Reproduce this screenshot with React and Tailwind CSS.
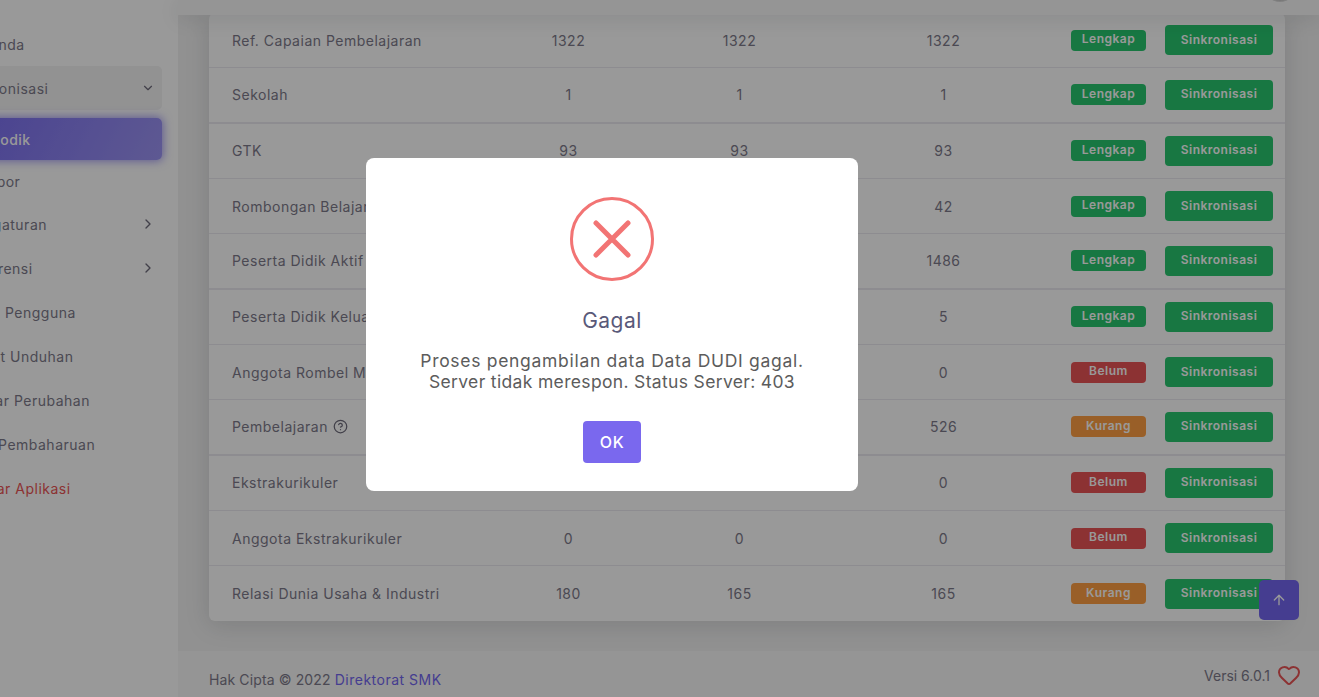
import React from 'react'
import { ChevronDown, ChevronRight, ArrowUp, Heart, HelpCircle } from 'lucide-react'

const font = { fontFamily: '"Inter", "Open Sans", sans-serif' }

const menu = [
  { label: 'Beranda', pl: 'pl-[36px]' },
  { label: 'Sinkronisasi', pl: 'pl-[33px]', open: true },
  { label: 'Dapodik', active: true },
  { label: 'E-Rapor', pl: 'pl-[33px]', short: true },
  { label: 'Pengaturan', pl: 'pl-[36px]', arrow: true },
  { label: 'Referensi', pl: 'pl-[36px]', arrow: true },
  { label: 'Data Pengguna', pl: 'pl-[38px]' },
  { label: 'Pusat Unduhan', pl: 'pl-[36px]' },
  { label: 'Daftar Perubahan', pl: 'pl-[36px]' },
  { label: 'Cek Pembaharuan', pl: 'pl-[36px]' },
  { label: 'Keluar Aplikasi', pl: 'pl-[36px]', danger: true },
]

const rows = [
  ['Ref. Capaian Pembelajaran', '1322', '1322', '1322', 'Lengkap'],
  ['Sekolah', '1', '1', '1', 'Lengkap'],
  ['GTK', '93', '93', '93', 'Lengkap'],
  ['Rombongan Belajar', '42', '42', '42', 'Lengkap'],
  ['Peserta Didik Aktif', '1486', '1486', '1486', 'Lengkap'],
  ['Peserta Didik Keluar', '5', '5', '5', 'Lengkap'],
  ['Anggota Rombel Matpil', '0', '0', '0', 'Belum'],
  ['Pembelajaran', '526', '526', '526', 'Kurang', true],
  ['Ekstrakurikuler', '0', '0', '0', 'Belum'],
  ['Anggota Ekstrakurikuler', '0', '0', '0', 'Belum'],
  ['Relasi Dunia Usaha & Industri', '180', '165', '165', 'Kurang'],
]

const badgeColor = {
  Lengkap: 'bg-[#28c76f]',
  Belum: 'bg-[#ea5455]',
  Kurang: 'bg-[#ff9f43]',
}

const SideItem = ({ item }) => {
  if (item.active) {
    return (
      <div className="ml-[-70px] flex h-[42px] w-[232px] items-center rounded-[5px] bg-[linear-gradient(118deg,#7367f0,rgba(115,103,240,0.7))] pl-[42px] text-[14px] font-medium tracking-[0.5px] text-white shadow-[0_0_10px_1px_rgba(115,103,240,0.7)]">
        {item.label}
      </div>
    )
  }
  return (
    <div className={`ml-[-70px] flex w-[232px] items-center justify-between rounded-[5px] pr-[6px] text-[14px] tracking-[0.5px] ${item.pl} ${item.short ? 'h-[42px]' : 'h-[44px]'} ${item.open ? 'mb-[8px] bg-[#f3f3f3]' : ''} ${item.danger ? 'text-[#ea5455]' : 'text-[#7d7a8a]'}`}>
      <span>{item.label}</span>
      {item.open && <ChevronDown size={14} className="mr-[1px] text-[#6e6b7b]" />}
      {item.arrow && <ChevronRight size={16} className="text-[#6e6b7b]" />}
    </div>
  )
}

const Row = ({ row, last, thick }) => (
  <div className={`flex items-center text-[14px] tracking-[0.5px] text-[#7d7a8a] ${last ? 'h-[55px]' : thick ? 'h-[55.33px] border-b-2 border-[#ebe9f1]' : 'h-[55.33px] border-b border-[#ebe9f1]'}`}>
    <div className="flex w-[286px] items-center gap-[5px] pl-[23px]">
      {row[0]}
      {row[5] && <HelpCircle size={15} className="text-[#6e6b7b]" />}
    </div>
    <div className="w-[147px] text-center">{row[1]}</div>
    <div className="w-[195px] text-center">{row[2]}</div>
    <div className="w-[213px] text-center">{row[3]}</div>
    <div className="flex w-[235px] items-center justify-end pr-[12px]">
      <span className={`flex h-[21px] w-[75px] items-center justify-center rounded-[4px] pb-[2px] text-[12px] font-semibold text-white ${badgeColor[row[4]]}`}>{row[4]}</span>
      <span className="ml-[19px] flex h-[30px] w-[108px] items-center justify-center rounded-[4px] bg-[#28c76f] pb-[1px] text-[12px] font-semibold text-white">Sinkronisasi</span>
    </div>
  </div>
)

export default function App() {
  return (
    <div className="relative flex h-[697px] w-[1319px] overflow-hidden bg-[#f2f2f2]" style={font}>
      {/* Sidebar */}
      <aside className="w-[178px] shrink-0 overflow-hidden bg-white pt-[22px]">
        {menu.map((item) => <SideItem key={item.label} item={item} />)}
      </aside>

      <main className="flex min-w-0 flex-1 flex-col">
        {/* Navbar, mostly scrolled away */}
        <header className="relative z-10 flex h-[15px] shrink-0 justify-end bg-[#f8f8f8] pr-[22px] shadow-[0_4px_20px_rgba(34,41,47,0.12)]">
          <div className="relative -mt-[32px] h-[34px] w-[34px] rounded-full border border-[#d8d8d8] bg-[#c9c9c9]">
            <span className="absolute bottom-[1px] right-[-4px] h-[10px] w-[10px] rounded-full bg-[#28c76f]" />
          </div>
        </header>

        <div className="flex-1 pl-[31px] pr-[34px]">
          <div className="-mt-[2px] overflow-hidden rounded-[6px] bg-white shadow-[0_4px_24px_rgba(34,41,47,0.15)]">
            {rows.map((row, i) => <Row key={row[0]} row={row} last={i === rows.length - 1} thick={i % 3 === 1} />)}
          </div>
        </div>

        <footer className="flex h-[46px] shrink-0 items-center justify-between bg-[#f8f8f8] pl-[31px] pr-[18px] text-[14px] text-[#7d7a8a]">
          <span className="pt-[10px] tracking-[0.12px]">Hak Cipta © 2022 <span className="tracking-[0.5px] text-[#7367f0]">Direktorat SMK</span></span>
          <span className="flex items-center gap-[7px] pt-[2px]">Versi 6.0.1 <Heart size={24} strokeWidth={2} className="text-[#ea5455]" /></span>
        </footer>
      </main>

      {/* Scroll to top */}
      <button className="absolute left-[1259px] top-[580px] flex h-[40px] w-[40px] items-center justify-center rounded-[5px] bg-[#7367f0] text-white">
        <ArrowUp size={16} />
      </button>

      {/* Dialog */}
      <div className="absolute inset-0 z-20 flex items-start justify-center bg-black/40 pt-[158px] pr-[95px]">
        <div className="flex h-[333px] w-[492px] flex-col items-center rounded-[8px] bg-white pt-[39px]">
          <svg width="84" height="84" viewBox="0 0 84 84" fill="none" stroke="#f27474">
            <circle cx="42" cy="42" r="40.5" strokeWidth="3" />
            <path d="M26 26 L58 58 M58 26 L26 58" strokeWidth="5" strokeLinecap="round" />
          </svg>
          <h2 className="mt-[25px] text-[21px] leading-[30px] font-normal tracking-[0.5px] text-[#595979]">Gagal</h2>
          <p className="mt-[14px] text-center text-[17.5px] leading-[21px] text-[#5c5c5c]">
            <span className="tracking-[0.7px]">Proses pengambilan data Data DUDI gagal.</span><br />
            <span className="tracking-[0.34px]">Server tidak merespon. Status Server: 403</span>
          </p>
          <button className="mt-[29px] flex h-[42px] w-[58px] items-center justify-center rounded-[4px] bg-[#7a68ee] text-[16px] font-medium tracking-[0.5px] text-white">OK</button>
        </div>
      </div>
    </div>
  )
}
